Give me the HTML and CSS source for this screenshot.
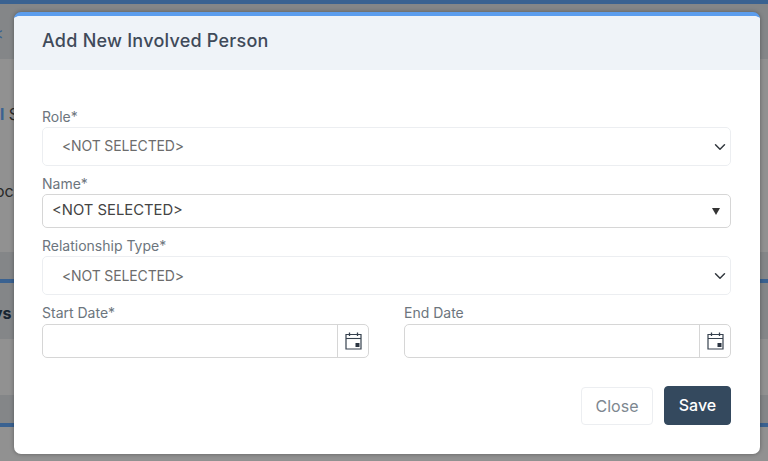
FILE: index.html
```html
<!DOCTYPE html>
<html>
<head>
<title>Add New Involved Person</title>
<link rel="stylesheet" href="styles.css">
</head>
<body>

<div class="page">
    <div class="top-bar"></div>
    <div class="section-head"><span class="back-link">&lt;</span></div>
    <div class="section-body">
        <div class="cut-text first"><span class="cut-blue">l</span> S</div>
        <div class="cut-text second">oc</div>
    </div>
    <div class="strip strip-one"></div>
    <div class="section">
        <div class="section-title"><span class="cut-bold">vs</span></div>
        <div class="section-rows"></div>
        <div class="strip strip-two"></div>
    </div>
    <div class="section"></div>
</div>
<div class="backdrop"></div>

<div class="modal">
    <div class="modal-header">Add New Involved Person</div>
    <div class="modal-body">
        <div class="field">
            <label>Role*</label>
            <div class="form-select select-role">&lt;NOT SELECTED&gt;
                <svg class="chevron" viewBox="0 0 16 16"><path d="M2 5l6 6 6-6" fill="none" stroke="#343a40" stroke-width="2" stroke-linecap="round" stroke-linejoin="round"/></svg>
            </div>
        </div>
        <div class="field">
            <label>Name*</label>
            <div class="combo">&lt;NOT SELECTED&gt;<span class="arrow"></span></div>
        </div>
        <div class="field">
            <label>Relationship Type*</label>
            <div class="form-select">&lt;NOT SELECTED&gt;
                <svg class="chevron" viewBox="0 0 16 16"><path d="M2 5l6 6 6-6" fill="none" stroke="#343a40" stroke-width="2" stroke-linecap="round" stroke-linejoin="round"/></svg>
            </div>
        </div>
        <div class="date-row">
            <div class="date-field">
                <label>Start Date*</label>
                <div class="date-input">
                    <div class="date-value"></div>
                    <div class="date-button">
                        <svg class="calendar" viewBox="0 0 17 18"><path d="M4.5 0.5v3.5M12.5 0.5v3.5" stroke="#36414e" stroke-width="1.3" fill="none"/><path d="M1 2.5h15v14.5H1z" stroke="#36414e" stroke-width="1.2" fill="none"/><path d="M1 6.5h15" stroke="#36414e" stroke-width="1.1"/><rect x="10.5" y="11" width="4" height="4" fill="#2b3441"/></svg>
                    </div>
                </div>
            </div>
            <div class="date-field">
                <label>End Date</label>
                <div class="date-input">
                    <div class="date-value"></div>
                    <div class="date-button">
                        <svg class="calendar" viewBox="0 0 17 18"><path d="M4.5 0.5v3.5M12.5 0.5v3.5" stroke="#36414e" stroke-width="1.3" fill="none"/><path d="M1 2.5h15v14.5H1z" stroke="#36414e" stroke-width="1.2" fill="none"/><path d="M1 6.5h15" stroke="#36414e" stroke-width="1.1"/><rect x="10.5" y="11" width="4" height="4" fill="#2b3441"/></svg>
                    </div>
                </div>
            </div>
        </div>
        <div class="actions">
            <div class="btn btn-close">Close</div>
            <div class="btn btn-save">Save</div>
        </div>
    </div>
</div>

</body>
</html>
```

FILE: styles.css
```css
* {
    box-sizing: border-box;
}
html, body {
    margin: 0;
    height: 100%;
    overflow: hidden;
}
body {
    font-family: Inter, "Liberation Sans", sans-serif;
    background: #fff;
}
.page {
    height: 461px;
    overflow: hidden;
}
.top-bar {
    height: 4px;
    background: #66acff;
}
.section-head {
    height: 55px;
    background: #e9ecef;
    padding-top: 19px;
}
.back-link {
    display: block;
    margin-left: -7px;
    font-size: 16px;
    line-height: 20px;
    color: #66acff;
}
.section-body {
    height: 193px;
    font-size: 16px;
    line-height: 20px;
    color: #4a4a4a;
}
.cut-text.first {
    padding-top: 45px;
}
.cut-text.second {
    padding-top: 57px;
    margin-left: -5px;
}
.cut-blue {
    color: #66acff;
    font-weight: 700;
}
.strip {
    background: #e9ecef;
}
.strip-one {
    height: 27px;
}
.strip-two {
    height: 28px;
}
.section {
    border-top: 4px solid #66acff;
}
.section-title {
    height: 56px;
    padding-top: 20px;
    background: #e9ecef;
    font-size: 16px;
    font-weight: 700;
    line-height: 20px;
    color: #2d4156;
}
.cut-bold {
    display: block;
    margin-left: -7px;
}
.section-rows {
    height: 56px;
}
.backdrop {
    position: absolute;
    inset: 0;
    background: rgba(0, 0, 0, 0.43);
}
.modal {
    position: absolute;
    left: 14px;
    top: 12px;
    width: 746px;
    height: 442px;
    background: #fff;
    border-top: 4px solid #5c9ded;
    border-radius: 7px;
    box-shadow: 0 0 4px rgba(0, 0, 0, 0.35);
    overflow: hidden;
}
.modal-header {
    height: 54px;
    background: #eff3f8;
    padding: 14px 28px 0 28px;
    font-size: 18px;
    font-weight: 450;
    letter-spacing: 0.24px;
    line-height: 22px;
    color: #3f4a5a;
}
.modal-body {
    padding: 37px 29px 0 28px;
}
.field {
    margin-bottom: 8px;
}
label {
    display: block;
    font-size: 14px;
    line-height: 20px;
    color: #6c757d;
}
.form-select {
    position: relative;
    height: 39px;
    border: 1px solid #eceef1;
    border-radius: 5px;
    padding-left: 19px;
    font-size: 14px;
    letter-spacing: -0.14px;
    line-height: 37px;
    color: #6c6c6c;
}
.select-role {
    line-height: 35px;
}
.chevron {
    position: absolute;
    right: 4px;
    top: 13px;
    width: 12px;
    height: 12px;
}
.combo {
    position: relative;
    height: 34px;
    border: 1px solid #d6d6d6;
    border-radius: 5px;
    padding-left: 9px;
    font-size: 14.8px;
    line-height: 30px;
    color: #444;
}
.arrow {
    position: absolute;
    right: 10px;
    top: 13px;
    border-left: 4.5px solid transparent;
    border-right: 4.5px solid transparent;
    border-top: 7px solid #333;
}
.date-row {
    display: flex;
    gap: 35px;
    margin-top: 1px;
}
.date-field {
    flex: 1;
}
.date-field label {
    height: 21px;
}
.date-input {
    display: flex;
    height: 34px;
    border: 1px solid #d6d6d6;
    border-radius: 5px;
}
.date-value {
    flex: 1;
}
.date-button {
    width: 31px;
    border-left: 1px solid #d6d6d6;
    display: flex;
    align-items: center;
    justify-content: center;
}
.calendar {
    width: 17px;
    height: 18px;
}
.actions {
    display: flex;
    justify-content: flex-end;
    align-items: center;
    gap: 11px;
    margin-top: 28px;
}
.btn {
    border-radius: 4px;
    font-size: 16px;
    text-align: center;
}
.btn-close {
    width: 72px;
    height: 38px;
    line-height: 36px;
    border: 1px solid #eceef1;
    color: #7d8790;
}
.btn-save {
    width: 67px;
    height: 39px;
    line-height: 37px;
    border: 1px solid #34495e;
    background: #34495e;
    color: #fff;
    font-weight: 500;
}
```
